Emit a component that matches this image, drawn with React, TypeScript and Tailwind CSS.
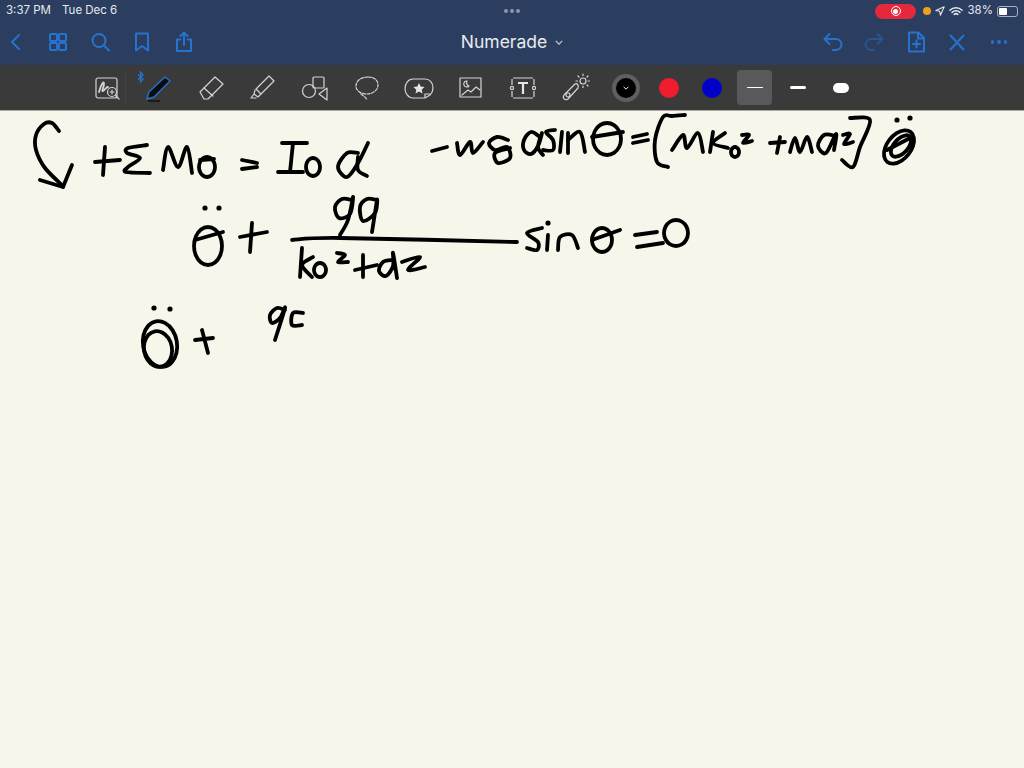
type Pt = [number, number];

// closed pen loop, for o, 0 and theta
function loop(cx: number, cy: number, rx: number, ry: number, deg = 0): Pt[] {
  const r = (deg * Math.PI) / 180;
  const pts: Pt[] = [];
  for (let i = 0; i <= 12; i++) {
    const t = (i / 12) * Math.PI * 2;
    const x = rx * Math.cos(t);
    const y = ry * Math.sin(t);
    pts.push([cx + x * Math.cos(r) - y * Math.sin(r), cy + x * Math.sin(r) + y * Math.cos(r)]);
  }
  return pts;
}

// handwriting on the note page, in page coordinates (y starts at 110)
const strokes: Pt[][] = [
  // first line: arrow + sum Mo = I alpha
  [[59, 131], [52, 123], [44, 124], [36, 135], [36, 150], [45, 168], [63, 186]],
  [[40, 180], [63, 187]],
  [[63, 187], [72, 165]],
  [[95, 162], [120, 160]],
  [[105, 147], [103, 175]],
  [[147, 145], [128, 148], [127, 153], [140, 158], [128, 167], [126, 172], [150, 173]],
  [[163, 170], [168, 147], [178, 167], [187, 147], [192, 173]],
  [[200, 160], [214, 159]],
  loop(207, 167, 8, 10),
  [[242, 160], [257, 163]],
  [[242, 169], [257, 167]],
  [[282, 143], [307, 143]],
  [[293, 143], [290, 172]],
  [[278, 172], [303, 172]],
  loop(313, 167, 7, 9),
  [[358, 153], [347, 153], [338, 167], [347, 177], [358, 163], [368, 143]],
  [[358, 157], [358, 170], [367, 176]],
  // first line, right: -mg a sin theta = [M k0^2 + m a^2] theta
  [[432, 151], [447, 147]],
  [[457, 143], [460, 155], [470, 142], [473, 153], [483, 142]],
  [[508, 140], [497, 137], [489, 143], [495, 150], [507, 147], [510, 158], [498, 163], [495, 153], [510, 148]],
  [[540, 137], [531, 132], [524, 140], [524, 150], [531, 154], [538, 146], [542, 133], [538, 147], [543, 155]],
  [[555, 130], [546, 132], [553, 140], [553, 150], [543, 150]],
  [[562, 132], [560, 152]],
  [[568, 133], [568, 153]],
  [[568, 140], [580, 132], [585, 152]],
  loop(607, 139, 14, 16),
  [[592, 137], [623, 132]],
  [[633, 137], [647, 134]],
  [[633, 143], [648, 140]],
  [[685, 115], [672, 116], [663, 117], [655, 140], [657, 162], [668, 167]],
  [[672, 150], [683, 135], [687, 148], [698, 133], [703, 152]],
  [[713, 132], [710, 152]],
  [[725, 133], [713, 143], [728, 148]],
  loop(735, 152, 4, 5),
  [[742, 135], [749, 135], [743, 143], [752, 141]],
  [[770, 143], [785, 142]],
  [[780, 137], [777, 153]],
  [[790, 152], [795, 138], [800, 152], [807, 137], [812, 152]],
  [[836, 136], [824, 135], [818, 146], [826, 153], [836, 134], [834, 150]],
  [[843, 135], [850, 134], [844, 144], [853, 142]],
  [[850, 118], [870, 120], [860, 147], [853, 167], [842, 160]],
  loop(899, 147, 12, 19, 38),
  loop(901, 146, 7, 13, 42),
  [[887, 150], [912, 137]],
  // second line: theta'' + ga / (k0^2 + a^2) sin theta = 0
  loop(208, 246, 14, 19),
  [[195, 240], [223, 232]],
  [[240, 237], [267, 232]],
  [[252, 223], [250, 252]],
  [[352, 200], [342, 199], [335, 207], [339, 218], [350, 214], [353, 197], [348, 220], [340, 235]],
  [[377, 200], [367, 199], [360, 207], [363, 221], [375, 213], [377, 200], [372, 232]],
  [[292, 240], [340, 238], [517, 242]],
  [[302, 248], [300, 277]],
  [[313, 257], [302, 265], [312, 277]],
  loop(320, 270, 6, 7),
  [[337, 253], [345, 255], [338, 262], [348, 262]],
  [[355, 270], [377, 265]],
  [[363, 255], [363, 277]],
  [[393, 260], [383, 262], [379, 271], [386, 276], [393, 266], [393, 253], [397, 278]],
  [[402, 262], [420, 257], [408, 270], [425, 267]],
  [[542, 228], [527, 233], [538, 242], [537, 250], [527, 248]],
  [[548, 235], [547, 250]],
  [[558, 250], [560, 237], [572, 235], [578, 248]],
  loop(602, 240, 10, 12),
  [[592, 240], [620, 230]],
  [[635, 235], [657, 232]],
  [[637, 247], [663, 243]],
  loop(676, 233, 12, 13),
  // third line: theta'' + gc
  loop(160, 344, 17, 23, -10),
  loop(158, 349, 14, 18, -10),
  [[195, 340], [213, 338]],
  [[202, 330], [208, 353]],
  [[285, 310], [277, 308], [270, 315], [272, 323], [280, 318], [285, 308], [275, 340]],
  [[303, 313], [293, 313], [292, 325], [302, 325]],
];

const dots: Pt[] = [
  [548, 223], [897, 120], [910, 118], [205, 208], [219, 208], [154, 308], [170, 309],
];

function smooth(p: Pt[]) {
  if (p.length < 3) return `M${p[0][0]} ${p[0][1]}L${p[1][0]} ${p[1][1]}`;
  const n = p.length;
  const closed = p[0][0] === p[n - 1][0] && p[0][1] === p[n - 1][1];
  const at = (i: number) => (closed ? p[(i + n - 1) % (n - 1)] : p[Math.min(Math.max(i, 0), n - 1)]);
  let d = `M${p[0][0]} ${p[0][1]}`;
  for (let i = 0; i < n - 1; i++) {
    const a = at(i - 1);
    const b = at(i);
    const c = at(i + 1);
    const e = at(i + 2);
    d += `C${b[0] + (c[0] - a[0]) / 6} ${b[1] + (c[1] - a[1]) / 6} ${c[0] - (e[0] - b[0]) / 6} ${c[1] - (e[1] - b[1]) / 6} ${c[0]} ${c[1]}`;
  }
  return d;
}

function Ink() {
  return (
    <svg viewBox="0 111 1024 657" className="block h-[657px] w-[1024px]" fill="none" stroke="#000" strokeWidth={3.8} strokeLinecap="round" strokeLinejoin="round">
      {strokes.map((s, i) => (
        <path key={i} d={smooth(s)} />
      ))}
      {dots.map(([x, y], i) => (
        <circle key={i} cx={x} cy={y} r={2.6} fill="#000" stroke="none" />
      ))}
    </svg>
  );
}

function NavIcon({ children }: { children: React.ReactNode }) {
  return (
    <svg viewBox="0 0 24 24" className="h-6 w-6" fill="none" stroke="currentColor" strokeWidth={2} strokeLinecap="round" strokeLinejoin="round">
      {children}
    </svg>
  );
}

function ToolIcon({ children }: { children: React.ReactNode }) {
  return (
    <svg viewBox="0 0 32 32" className="h-8 w-8" fill="none" stroke="#d4d4d4" strokeWidth={1.2} strokeLinecap="round" strokeLinejoin="round">
      {children}
    </svg>
  );
}

function Cell({ children, wide }: { children: React.ReactNode; wide?: boolean }) {
  return <div className={wide ? "flex h-full w-[52px] items-center justify-center" : "flex h-full w-[43px] items-center justify-center"}>{children}</div>;
}

function StatusBar() {
  return (
    <div className="grid h-[22px] grid-cols-3 items-center px-[6px] text-[11.5px] text-[#e4e8ef]">
      <div className="flex gap-[11px]">
        <span>3:37 PM</span>
        <span>Tue Dec 6</span>
      </div>
      <div className="flex justify-center gap-[2px]">
        <span className="h-[4px] w-[4px] rounded-full bg-[#8d97a9]" />
        <span className="h-[4px] w-[4px] rounded-full bg-[#8d97a9]" />
        <span className="h-[4px] w-[4px] rounded-full bg-[#8d97a9]" />
      </div>
      <div className="flex items-center justify-end">
        <div className="flex h-[15px] w-[41px] items-center justify-center rounded-full bg-[#e5283a]">
          <span className="flex h-[10px] w-[10px] items-center justify-center rounded-full border border-white">
            <span className="h-[5px] w-[5px] rounded-full bg-white" />
          </span>
        </div>
        <span className="ml-[7px] h-[8px] w-[8px] rounded-full bg-[#f0a020]" />
        <svg viewBox="0 0 12 12" className="ml-[4px] h-[10px] w-[10px]" fill="none" stroke="#e4e8ef" strokeWidth={1.3} strokeLinejoin="round">
          <path d="M11 1 1 5.5l4.6.9.9 4.6z" />
        </svg>
        <svg viewBox="0 0 16 12" className="ml-[4px] h-[11px] w-[14px]" fill="none" stroke="#e4e8ef" strokeWidth={1.7} strokeLinecap="round">
          <path d="M1 4.5a10 10 0 0 1 14 0M3.5 7a6.5 6.5 0 0 1 9 0M6 9.3a3 3 0 0 1 4 0" />
        </svg>
        <span className="ml-[4px]">38%</span>
        <div className="ml-[4px] h-[11px] w-[21px] rounded-[3px] border border-[#a8b0bd] p-[1px]">
          <div className="h-full w-[8px] rounded-[1px] bg-white" />
        </div>
      </div>
    </div>
  );
}

function NavBar() {
  return (
    <div className="grid h-[43px] grid-cols-3 items-center px-[4px] pb-[3px] text-[#2672cf]">
      <div className="flex items-center gap-[18px]">
        <NavIcon>
          <path d="m15 5-7 7 7 7" />
        </NavIcon>
        <NavIcon>
          <rect x="4" y="4" width="7" height="7" rx="1" />
          <rect x="13" y="4" width="7" height="7" rx="1" />
          <rect x="4" y="13" width="7" height="7" rx="1" />
          <rect x="13" y="13" width="7" height="7" rx="1" />
        </NavIcon>
        <NavIcon>
          <circle cx="11" cy="10.5" r="6.5" />
          <path d="m16 15.5 5 5" />
        </NavIcon>
        <NavIcon>
          <path d="M6 3.5h12v17l-6-4.5-6 4.5z" />
        </NavIcon>
        <NavIcon>
          <path d="M8.5 9.5H5V21h14V9.500h-3.500M12 15V2.500M8.500 6 12 2.500 15.500 6" />
        </NavIcon>
      </div>
      <div className="flex items-center justify-center gap-[8px] text-[17.5px] text-[#e8ebf0]">
        <span>Numerade</span>
        <svg viewBox="0 0 10 6" className="h-[5px] w-[8px]" fill="none" stroke="#c9ced8" strokeWidth={1.4}>
          <path d="m1 1 4 4 4-4" />
        </svg>
      </div>
      <div className="mr-[9px] flex items-center justify-end gap-[17.5px]">
        <NavIcon>
          <path d="M8.5 4 3.500 9l5 5M4 9h11a5 5 0 0 1 0 11h-3" />
        </NavIcon>
        <div className="text-[#28548f]">
          <NavIcon>
            <path d="M15.5 4l5 5-5 5M20 9H9a5 5 0 0 0 0 11h3" />
          </NavIcon>
        </div>
        <NavIcon>
          <path d="M5 2.5h9.500L20 8v13.500H5zM14 3v5.500h6M12.500 10.500v7M9 14h7" />
        </NavIcon>
        <NavIcon>
          <path d="M18.5 5.500 5.500 19.500M5.500 5.500 18.500 19.500" />
        </NavIcon>
        <div className="flex w-[24px] items-center justify-center gap-[3px]">
          <span className="h-[3.5px] w-[3.5px] shrink-0 rounded-full bg-[#2672cf]" />
          <span className="h-[3.5px] w-[3.5px] shrink-0 rounded-full bg-[#2672cf]" />
          <span className="h-[3.5px] w-[3.5px] shrink-0 rounded-full bg-[#2672cf]" />
        </div>
      </div>
    </div>
  );
}

function ToolBar() {
  return (
    <div className="flex h-[45px] items-center bg-[#3a3a3a] pl-[89px]">
      <div className="flex h-full w-[36px] items-center justify-center">
        <ToolIcon>
          <rect x="5" y="6" width="21" height="20" rx="2" />
          <path strokeWidth={1.8} d="M8 20c3-10 5-11 5-8s-3 8-1 7 3-4 5-4" />
          <circle cx="21" cy="20" r="4.5" />
          <path d="M24.5 23.500 28 27M19 20h4M21 18v4" />
        </ToolIcon>
      </div>
      <div className="h-[32px] w-px bg-[#454545]" />
      <div className="w-[7px]" />
      <Cell wide>
        <svg viewBox="0 0 32 32" className="h-8 w-8 overflow-visible" fill="none">
          <path d="M4 27l2-7L22 5l5 4-16 16z" fill="#0b0b0b" stroke="#2672cf" strokeWidth={1.4} strokeLinejoin="round" />
          <path d="M5 29h12" stroke="#111" strokeWidth={1.5} />
          <path d="M-5 2.5 0 7l-2.500 3V0L0 3-5 7.500" stroke="#2672cf" strokeWidth={1.3} />
        </svg>
      </Cell>
      <Cell wide>
        <ToolIcon>
          <path d="M5 20 20 5l8 7-15 15H9z" />
          <path d="m9 16 9 8" />
        </ToolIcon>
      </Cell>
      <Cell wide>
        <ToolIcon>
          <path d="M9 17 22 4l5 5-13 13zM8 18l-1 4 4 3 3-3M7 22l-3 4h5" />
        </ToolIcon>
      </Cell>
      <Cell wide>
        <ToolIcon>
          <rect x="14" y="5" width="11" height="11" rx="1" />
          <circle cx="10" cy="19" r="6.5" />
          <path d="m28 16-8 6 8 6z" />
        </ToolIcon>
      </Cell>
      <Cell wide>
        <ToolIcon>
          <path strokeDasharray="3 1.5" d="M17 5c6 0 10 3 10 8s-5 9-11 9-11-3-11-8 5-9 12-9zM10 22c2 2 5 3 6 6" />
        </ToolIcon>
      </Cell>
      <Cell wide>
        <svg viewBox="0 0 32 32" className="h-8 w-8" fill="none" stroke="#d4d4d4" strokeWidth={1.2}>
          <path d="M10 7h12c5 0 8 4 8 9 0 3-1 5-3 7l-5 3H10C5 26 2 21 2 16.500S5 7 10 7z" />
          <path d="M22 26v-4h5" />
          <path d="m16 11 1.700 3.600 3.800.5-2.800 2.600.8 3.800-3.500-2-3.500 2 .8-3.800-2.800-2.600 3.800-.5z" fill="#e6e6e6" stroke="none" />
        </svg>
      </Cell>
      <Cell wide>
        <ToolIcon>
          <rect x="5" y="6" width="21" height="19" />
          <path d="m7 23 6-5 3 2 5-5 4 3M12 9a3 3 0 1 0 2 5 3.500 3.500 0 0 1-2-5z" />
        </ToolIcon>
      </Cell>
      <Cell wide>
        <svg viewBox="0 0 32 32" className="h-8 w-8" fill="none" stroke="#d4d4d4" strokeWidth={1.2}>
          <path d="M6 6h20M6 26h20M5 7v6M27 7v6M5 19v6M27 19v6" />
          <circle cx="5" cy="16" r="1.6" />
          <circle cx="27" cy="16" r="1.6" />
          <path d="M11 11h10M16 11v11" stroke="#e6e6e6" strokeWidth={2.2} />
        </svg>
      </Cell>
      <Cell wide>
        <ToolIcon>
          <path d="M5 23 16 12c2-1 4 1 3 4L9 27c-3 2-6-1-4-4z" />
          <circle cx="9" cy="23" r="2" />
          <circle cx="24" cy="9" r="3" />
          <path strokeDasharray="1.5 1.5" d="M24 2v2M24 14v2M17 9h2M29 9h2M19 4l1 1M28 13l1 1M29 4l-1 1" />
        </ToolIcon>
      </Cell>
      <div className="ml-[3px] flex h-full items-center">
        <Cell>
          <span className="flex h-[28px] w-[28px] items-center justify-center rounded-full bg-[#5f5f5f]">
            <span className="flex h-[20px] w-[20px] items-center justify-center rounded-full bg-black">
              <svg viewBox="0 0 10 6" className="h-[4px] w-[6px]" fill="none" stroke="#fff" strokeWidth={1.6}>
                <path d="m1 1 4 4 4-4" />
              </svg>
            </span>
          </span>
        </Cell>
        <Cell>
          <span className="h-[20px] w-[20px] rounded-full bg-[#ee1c2e]" />
        </Cell>
        <Cell>
          <span className="h-[20px] w-[20px] rounded-full bg-[#0000c8]" />
        </Cell>
        <Cell>
          <span className="flex h-[35px] w-[35px] items-center justify-center rounded-[4px] bg-[#59595b]">
            <span className="h-[1.5px] w-[16px] rounded-full bg-white" />
          </span>
        </Cell>
        <Cell>
          <span className="h-[3.5px] w-[16px] rounded-full bg-white" />
        </Cell>
        <Cell>
          <span className="h-[10px] w-[16px] rounded-[5px] bg-white" />
        </Cell>
      </div>
    </div>
  );
}

export default function App() {
  return (
    <div className="flex h-[768px] w-[1024px] flex-col overflow-hidden bg-[#f6f6ea] font-['Inter',sans-serif]">
      <div className="h-[65px] bg-[#2c3e5f]">
        <StatusBar />
        <NavBar />
      </div>
      <ToolBar />
      <div className="h-[1px] bg-[#a9a99f]" />
      <Ink />
    </div>
  );
}
